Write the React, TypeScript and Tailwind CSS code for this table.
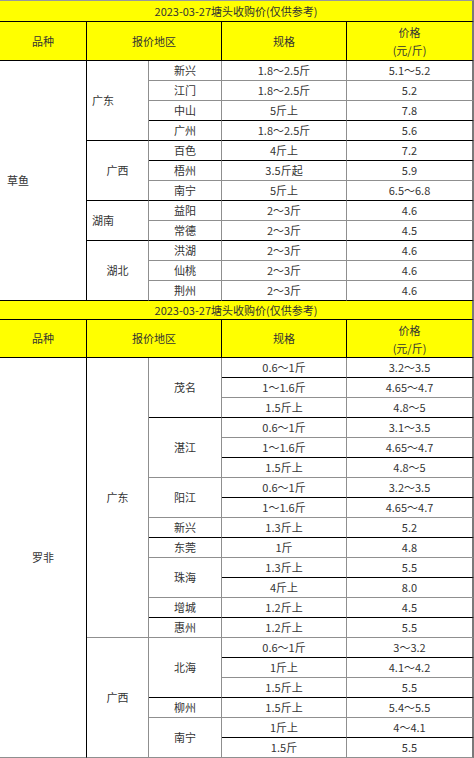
import React from 'react';

// [spec, price, dark bottom line]
type Row = [string, string, boolean];
type City = { name: string; rows: Row[] };
type Province = { name: string; left?: boolean; dark: boolean; cities: City[] };
type Block = {
  species: string;
  speciesLeft?: boolean;
  speciesDark: boolean;
  first?: boolean;
  provinces: Province[];
};

const blocks: Block[] = [
  {
    species: '草鱼',
    speciesLeft: true,
    speciesDark: true,
    first: true,
    provinces: [
      {
        name: '广东',
        left: true,
        dark: true,
        cities: [
          { name: '新兴', rows: [['1.8～2.5斤', '5.1～5.2', false]] },
          { name: '江门', rows: [['1.8～2.5斤', '5.2', false]] },
          { name: '中山', rows: [['5斤上', '7.8', true]] },
          { name: '广州', rows: [['1.8～2.5斤', '5.6', true]] },
        ],
      },
      {
        name: '广西',
        dark: true,
        cities: [
          { name: '百色', rows: [['4斤上', '7.2', true]] },
          { name: '梧州', rows: [['3.5斤起', '5.9', false]] },
          { name: '南宁', rows: [['5斤上', '6.5～6.8', true]] },
        ],
      },
      {
        name: '湖南',
        left: true,
        dark: true,
        cities: [
          { name: '益阳', rows: [['2～3斤', '4.6', false]] },
          { name: '常德', rows: [['2～3斤', '4.5', true]] },
        ],
      },
      {
        name: '湖北',
        dark: true,
        cities: [
          { name: '洪湖', rows: [['2～3斤', '4.6', false]] },
          { name: '仙桃', rows: [['2～3斤', '4.6', false]] },
          { name: '荆州', rows: [['2～3斤', '4.6', true]] },
        ],
      },
    ],
  },
  {
    species: '罗非',
    speciesDark: false,
    provinces: [
      {
        name: '广东',
        dark: false,
        cities: [
          {
            name: '茂名',
            rows: [
              ['0.6～1斤', '3.2～3.5', true],
              ['1～1.6斤', '4.65～4.7', false],
              ['1.5斤上', '4.8～5', true],
            ],
          },
          {
            name: '湛江',
            rows: [
              ['0.6～1斤', '3.1～3.5', false],
              ['1～1.6斤', '4.65～4.7', true],
              ['1.5斤上', '4.8～5', false],
            ],
          },
          {
            name: '阳江',
            rows: [
              ['0.6～1斤', '3.2～3.5', true],
              ['1～1.6斤', '4.65～4.7', false],
            ],
          },
          { name: '新兴', rows: [['1.3斤上', '5.2', true]] },
          { name: '东莞', rows: [['1斤', '4.8', false]] },
          {
            name: '珠海',
            rows: [
              ['1.3斤上', '5.5', true],
              ['4斤上', '8.0', false],
            ],
          },
          { name: '增城', rows: [['1.2斤上', '4.5', true]] },
          { name: '惠州', rows: [['1.2斤上', '5.5', false]] },
        ],
      },
      {
        name: '广西',
        dark: false,
        cities: [
          {
            name: '北海',
            rows: [
              ['0.6～1斤', '3～3.2', true],
              ['1斤上', '4.1～4.2', false],
              ['1.5斤上', '5.5', true],
            ],
          },
          { name: '柳州', rows: [['1.5斤上', '5.4～5.5', false]] },
          {
            name: '南宁',
            rows: [
              ['1斤上', '4～4.1', true],
              ['1.5斤', '5.5', false],
            ],
          },
        ],
      },
    ],
  },
];

const bottom = (dark: boolean) => (dark ? 'border-b-black' : 'border-b-[#8f8f8f]');

const countRows = (p: Province) => p.cities.reduce((n, c) => n + c.rows.length, 0);

function TitleRows({ block }: { block: Block }) {
  return (
    <>
      <tr className={block.first ? 'h-[22px]' : 'h-[19px]'}>
        <td
          colSpan={5}
          className={`bg-[#ffff00] text-center border-b border-b-black border-r-2 border-r-[#7a7a7a] ${
            block.first ? 'border-t border-t-[#9a9a9a]' : ''
          }`}
        >
          2023-03-27塘头收购价(仅供参考)
        </td>
      </tr>
      <tr className={block.first ? 'h-[39px]' : 'h-[38px]'}>
        <td className="bg-[#ffff00] text-center border-b border-r border-black">品种</td>
        <td colSpan={2} className="bg-[#ffff00] text-center border-b border-r border-black">
          报价地区
        </td>
        <td className="bg-[#ffff00] text-center border-b border-r border-black">规格</td>
        <td className="bg-[#ffff00] text-center border-b border-b-black border-r-2 border-r-[#7a7a7a] leading-[18px]">
          <div>价格</div>
          <div>(元/斤)</div>
        </td>
      </tr>
    </>
  );
}

function DataRows({ block }: { block: Block }) {
  const total = block.provinces.reduce((n, p) => n + countRows(p), 0);
  const rows: React.ReactNode[] = [];

  block.provinces.forEach((p, pi) => {
    p.cities.forEach((c, ci) => {
      c.rows.forEach(([spec, price, dark], ri) => {
        const firstOfBlock = pi === 0 && ci === 0 && ri === 0;
        const firstOfProvince = ci === 0 && ri === 0;
        const lastCityRow = c.rows[c.rows.length - 1];
        rows.push(
          <tr key={`${pi}-${ci}-${ri}`} className="h-[20px]">
            {firstOfBlock && (
              <td
                rowSpan={total}
                className={`border-b border-r border-r-black ${bottom(block.speciesDark)} ${
                  block.speciesLeft ? 'text-left pl-[7px]' : 'text-center'
                }`}
              >
                {block.species}
              </td>
            )}
            {firstOfProvince && (
              <td
                rowSpan={countRows(p)}
                className={`border-b border-r border-r-[#8f8f8f] ${bottom(p.dark)} ${
                  p.left ? 'text-left pl-[5px]' : 'text-center'
                }`}
              >
                {p.name}
              </td>
            )}
            {ri === 0 && (
              <td
                rowSpan={c.rows.length}
                className={`text-center border-b border-r border-r-[#8f8f8f] ${bottom(lastCityRow[2])}`}
              >
                {c.name}
              </td>
            )}
            <td className={`text-center border-b border-r border-r-[#8f8f8f] ${bottom(dark)}`}>{spec}</td>
            <td className={`text-center border-b border-r-2 border-r-[#7a7a7a] ${bottom(dark)}`}>{price}</td>
          </tr>
        );
      });
    });
  });

  return <>{rows}</>;
}

export default function App() {
  return (
    <div className="w-[474px] h-[758px] overflow-hidden bg-white">
      <table className="table-fixed w-[474px] border-separate border-spacing-0 text-[11px] leading-none text-[#333] font-['Noto_Sans_CJK_SC','Liberation_Sans',sans-serif]">
        <colgroup>
          <col className="w-[87px]" />
          <col className="w-[62px]" />
          <col className="w-[73px]" />
          <col className="w-[125px]" />
          <col className="w-[127px]" />
        </colgroup>
        <tbody>
          {blocks.map((b) => (
            <React.Fragment key={b.species}>
              <TitleRows block={b} />
              <DataRows block={b} />
            </React.Fragment>
          ))}
        </tbody>
      </table>
    </div>
  );
}
